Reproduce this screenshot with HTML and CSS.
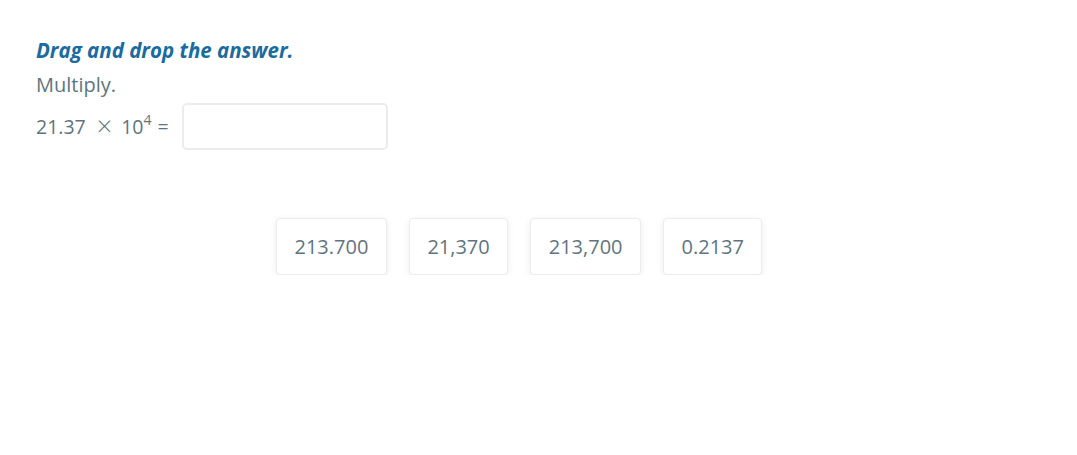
FILE: index.html
```html
<!DOCTYPE html>
<html>
<head>
<meta charset="utf-8">
<link rel="stylesheet" href="styles.css">
</head>
<body>
<div class="page">
  <h1 class="title">Drag and drop the answer.</h1>
  <p class="prompt">Multiply.</p>
  <div class="equation">
    <span class="expr">21.37<span class="times">×</span>10<sup>4</sup> =</span>
    <div class="dropzone"></div>
  </div>
  <div class="tiles">
    <div class="tile">213.700</div>
    <div class="tile">21,370</div>
    <div class="tile">213,700</div>
    <div class="tile">0.2137</div>
  </div>
</div>
</body>
</html>
```
FILE: styles.css
```css
html, body {
  margin: 0;
  padding: 0;
  background: #ffffff;
}
body {
  font-family: "Open Sans", "Noto Sans", sans-serif;
  color: #5f747f;
}
.page {
  padding: 36px 36px 0 36px;
}
.title {
  margin: 0;
  font-size: 20.5px;
  font-weight: 700;
  font-style: italic;
  color: #1b6aa0;
  line-height: 28px;
}
.prompt {
  margin: 8px 0 0 0;
  font-size: 20px;
  line-height: 26px;
}
.equation {
  display: flex;
  align-items: center;
  gap: 13px;
  margin-top: 5px;
}
.expr {
  font-size: 19.5px;
  line-height: 24px;
  white-space: nowrap;
}
.times {
  font-size: 27px;
  font-weight: 300;
  margin: 0 9px 0 11px;
  vertical-align: -2px;
  line-height: 0;
}
.expr sup {
  font-size: 14px;
  line-height: 0;
  vertical-align: 9px;
  margin-right: 1px;
}
.dropzone {
  width: 202px;
  height: 43px;
  border: 2px solid #ececec;
  border-radius: 5px;
}
.tiles {
  display: flex;
  gap: 22px;
  margin-top: 68px;
  padding-left: 240px;
}
.tile {
  height: 55px;
  padding: 0 17.5px;
  display: flex;
  align-items: center;
  font-size: 20px;
  border: 1px solid #ececec;
  border-radius: 4px;
  box-shadow: 0 2px 7px rgba(0,0,0,0.08);
  background: #fff;
}
```
